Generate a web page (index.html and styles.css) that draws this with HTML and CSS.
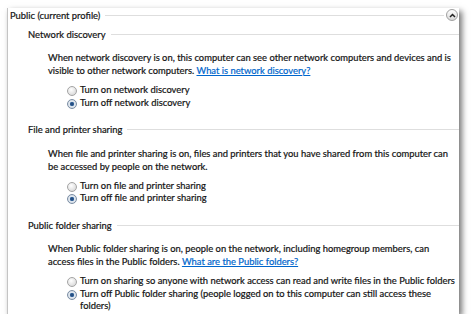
FILE: index.html
```html
<!DOCTYPE html>
<html lang="en">
<head>
  <meta charset="UTF-8" />
  <title>Advanced sharing settings</title>
  <link rel="stylesheet" href="styles.css">
</head>
<body>

<div class="panel">
  <div class="profile-head">
    <span>Public (current profile)</span>
    <span class="rule"></span>
    <span class="collapse">
      <svg width="7" height="5" viewBox="0 0 7 5"><path d="M1 4 L3.5 1.5 L6 4" fill="none" stroke="#222" stroke-width="1.5"/></svg>
    </span>
  </div>

  <div class="group">
    <div class="group-head"><span>Network discovery</span><span class="rule"></span></div>
    <p class="desc">When network discovery is on, this computer can see other network computers and devices and is visible to other network computers. <a href="#">What is network discovery?</a></p>
    <div class="options">
      <div class="option"><span class="radio"></span><span>Turn on network discovery</span></div>
      <div class="option"><span class="radio checked"></span><span>Turn off network discovery</span></div>
    </div>
  </div>

  <div class="group">
    <div class="group-head"><span>File and printer sharing</span><span class="rule"></span></div>
    <p class="desc">When file and printer sharing is on, files and printers that you have shared from this computer can be accessed by people on the network.</p>
    <div class="options">
      <div class="option"><span class="radio"></span><span>Turn on file and printer sharing</span></div>
      <div class="option"><span class="radio checked"></span><span>Turn off file and printer sharing</span></div>
    </div>
  </div>

  <div class="group">
    <div class="group-head"><span>Public folder sharing</span><span class="rule"></span></div>
    <p class="desc">When Public folder sharing is on, people on the network, including homegroup members, can access files in the Public folders. <a href="#">What are the Public folders?</a></p>
    <div class="options">
      <div class="option"><span class="radio"></span><span>Turn on sharing so anyone with network access can read and write files in the Public folders</span></div>
      <div class="option"><span class="radio checked"></span><span>Turn off Public folder sharing (people logged on to this computer can still access these folders)</span></div>
    </div>
  </div>
</div>

</body>
</html>
```

FILE: styles.css
```css
body {
  margin: 0;
  background: #fff;
  font-family: Lato, "Liberation Sans", sans-serif;
  font-size: 9.4px;
  color: #141414;
  -webkit-text-stroke: 0.2px #141414;
}

.panel {
  margin: 8px 0 0 7px;
  width: 452px;
  height: 306px;
  box-sizing: border-box;
  background: #fff;
  border-left: 1px solid #c4c4c4;
  box-shadow: 3px 3px 6px rgba(0, 0, 0, 0.55);
  overflow: hidden;
  padding-left: 2px;
}

.profile-head {
  display: flex;
  align-items: center;
  height: 14px;
  padding-right: 1px;
}

.profile-head .rule {
  margin-right: 2px;
}

.rule {
  flex: 1;
  height: 0;
  border-top: 1px solid #dedede;
  margin-left: 5px;
}

.collapse {
  width: 10px;
  height: 10px;
  border-radius: 50%;
  border: 1px solid #a0a0a0;
  background: linear-gradient(#ffffff, #d8d8d8);
  display: flex;
  align-items: center;
  justify-content: center;
}

.group {
  padding-left: 18px;
}

.group-head {
  display: flex;
  align-items: center;
  height: 14px;
  margin-top: 5px;
}

.group + .group .group-head {
  margin-top: 13.5px;
}

.desc {
  margin: 10px 0 0 20px;
  line-height: 13px;
  padding-right: 4px;
}

.desc a {
  color: #0066cc;
  -webkit-text-stroke-color: #0066cc;
}

.options {
  margin: 7px 0 0 39px;
}

.option {
  display: flex;
  align-items: flex-start;
  line-height: 12.5px;
}

.radio {
  flex: none;
  width: 8px;
  height: 8px;
  margin: 2px 3px 0 0;
  border-radius: 50%;
  border: 1px solid #a4a4a4;
  background: radial-gradient(circle at 40% 35%, #ffffff, #d0d0d0);
}

.radio.checked {
  background: radial-gradient(circle, #1d3f6e 0, #35659c 1.8px, #e6ecf2 2.6px, #c6d0dc 5px);
  border-color: #7c8ea4;
}
```
